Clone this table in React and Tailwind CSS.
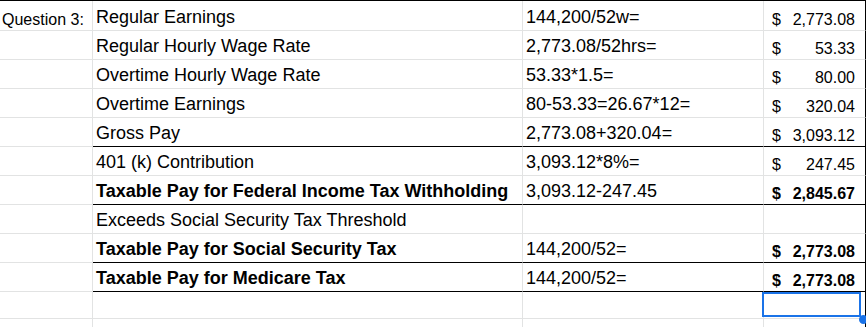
const rows = [
  { h: 'h-[30px]', a: 'Question 3:', b: 'Regular Earnings', c: '144,200/52w=', d: '2,773.08' },
  { h: 'h-[29px]', b: 'Regular Hourly Wage Rate', c: '2,773.08/52hrs=', d: '53.33' },
  { h: 'h-[29px]', b: 'Overtime Hourly Wage Rate', c: '53.33*1.5=', d: '80.00' },
  { h: 'h-[29px]', b: 'Overtime Earnings', c: '80-53.33=26.67*12=', d: '320.04' },
  { h: 'h-[29px]', b: 'Gross Pay', c: '2,773.08+320.04=', d: '3,093.12', line: true },
  { h: 'h-[29px]', b: '401 (k) Contribution', c: '3,093.12*8%=', d: '247.45' },
  {
    h: 'h-[29px]',
    b: 'Taxable Pay for Federal Income Tax Withholding',
    c: '3,093.12-247.45',
    d: '2,845.67',
    bold: true,
    line: true,
  },
  { h: 'h-[29px]', b: 'Exceeds Social Security Tax Threshold' },
  { h: 'h-[29px]', b: 'Taxable Pay for Social Security Tax', c: '144,200/52=', d: '2,773.08', bold: true, line: true },
  { h: 'h-[29px]', b: 'Taxable Pay for Medicare Tax', c: '144,200/52=', d: '2,773.08', bold: true, line: true },
  { h: 'h-[27px]', selected: true },
  { h: 'h-[29px]' },
];

const Row = ({ row }) => {
  const edge = row.line ? 'border-b-black' : 'border-b-[#e2e3e3]';
  const weight = row.bold ? 'font-bold' : 'font-normal';
  return (
    <div className={`grid grid-cols-[93px_430px_241px_102px] ${row.h}`}>
      <div className="flex items-end border-r border-b border-[#e2e3e3] pl-[2px] pb-[1px] text-[16px] leading-[18px]">
        {row.a}
      </div>
      <div
        className={`flex items-end border-r border-b border-r-[#e2e3e3] ${edge} pl-[3px] pb-[3px] text-[18px] leading-[20px] whitespace-nowrap ${weight}`}
      >
        {row.b}
      </div>
      <div
        className={`flex items-end border-r border-b border-r-[#e2e3e3] ${edge} pl-[3px] pb-[3px] text-[18px] leading-[20px] whitespace-nowrap`}
      >
        {row.c}
      </div>
      <div
        className={`relative flex items-end justify-between border-r border-b border-r-black ${edge} pl-[8px] pr-[10px] pb-[1px] text-[16px] leading-[18px] ${weight}`}
      >
        {row.d && (
          <>
            <span>$</span>
            <span>{row.d}</span>
          </>
        )}
        {row.selected && (
          <>
            <div className="absolute left-[-2px] top-0 h-[25px] w-[99px] border-2 border-[#1a73e8]" />
            <div className="absolute left-[95px] top-[23px] z-10 h-[9px] w-[9px] rounded-full bg-[#1a73e8]" />
          </>
        )}
      </div>
    </div>
  );
};

export default function App() {
  return (
    <div className="h-[327px] w-[866px] overflow-hidden bg-white font-['Liberation_Sans',Arial,sans-serif] text-black">
      <div className="border-t border-black">
        {rows.map((row, i) => (
          <Row key={i} row={row} />
        ))}
      </div>
    </div>
  );
}
